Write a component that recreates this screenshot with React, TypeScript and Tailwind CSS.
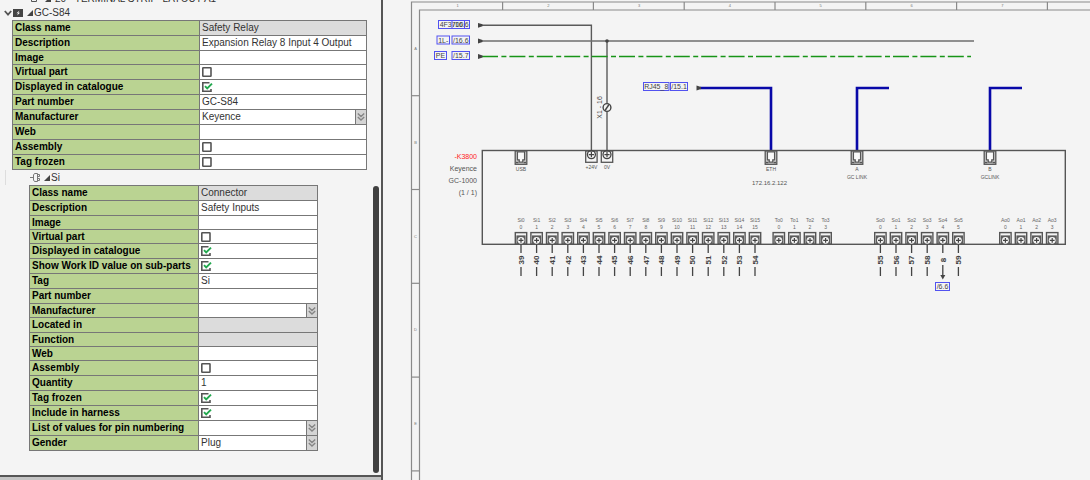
import type { ReactNode } from "react";

type Kind = "readonly" | "text" | "check" | "select";

interface Property {
  label: string;
  kind: Kind;
  value?: string;
  checked?: boolean;
  short?: boolean;
}

const relayProperties: Property[] = [
  { label: "Class name", kind: "readonly", value: "Safety Relay" },
  { label: "Description", kind: "text", value: "Expansion Relay 8 Input 4 Output" },
  { label: "Image", kind: "text", short: true },
  { label: "Virtual part", kind: "check" },
  { label: "Displayed in catalogue", kind: "check", checked: true },
  { label: "Part number", kind: "text", value: "GC-S84" },
  { label: "Manufacturer", kind: "select", value: "Keyence" },
  { label: "Web", kind: "text" },
  { label: "Assembly", kind: "check" },
  { label: "Tag frozen", kind: "check" },
];

const connectorProperties: Property[] = [
  { label: "Class name", kind: "readonly", value: "Connector" },
  { label: "Description", kind: "text", value: "Safety Inputs" },
  { label: "Image", kind: "text", short: true },
  { label: "Virtual part", kind: "check", short: true },
  { label: "Displayed in catalogue", kind: "check", checked: true },
  { label: "Show Work ID value on sub-parts", kind: "check", checked: true },
  { label: "Tag", kind: "text", value: "Si" },
  { label: "Part number", kind: "text" },
  { label: "Manufacturer", kind: "select", short: true },
  { label: "Located in", kind: "readonly" },
  { label: "Function", kind: "readonly", short: true },
  { label: "Web", kind: "text", short: true },
  { label: "Assembly", kind: "check" },
  { label: "Quantity", kind: "text", value: "1" },
  { label: "Tag frozen", kind: "check", checked: true },
  { label: "Include in harness", kind: "check", checked: true },
  { label: "List of values for pin numbering", kind: "select" },
  { label: "Gender", kind: "select", value: "Plug" },
];

const CheckField = ({ id, checked }: { id: string; checked?: boolean }) => (
  <span className="relative ml-px flex size-3 items-center">
    <input id={id} type="checkbox" defaultChecked={checked} className="peer absolute inset-0 appearance-none" />
    <svg viewBox="0 0 12 12" className="pointer-events-none relative size-3 peer-checked:hidden">
      <rect x="1.8" y="1.8" width="8.2" height="8.4" rx="0.5" fill="none" stroke="#555" strokeWidth="1.6" />
    </svg>
    <svg viewBox="0 0 12 12" className="pointer-events-none relative hidden size-3 peer-checked:block">
      <path d="M8.5 1.8H1.8V10.2H10V8" fill="none" stroke="#555" strokeWidth="1.6" />
      <path d="M4 5.2L6.2 7.5L11 2.6" fill="none" stroke="#22a84e" strokeWidth="1.9" />
    </svg>
  </span>
);

const Field = ({ id, property }: { id: string; property: Property }) => {
  const { kind, value = "", checked } = property;
  if (kind === "check") return <CheckField id={id} checked={checked} />;
  if (kind === "select") {
    return (
      <span className="relative flex h-full">
        <select
          id={id}
          defaultValue={value}
          className="h-full w-full appearance-none bg-white pl-0.5 leading-3 outline-none"
        >
          <option value={value}>{value}</option>
        </select>
        <span className="pointer-events-none absolute inset-y-0 right-0 flex w-[11px] items-center justify-center border-l border-[#777] bg-[#d4d4d4]">
          <svg viewBox="0 0 8 8" className="size-2" fill="none" stroke="#858585" strokeWidth="1.4">
            <path d="M0.8 0.5L4 3.6L7.2 0.5M0.8 3.9L4 7L7.2 3.9" />
          </svg>
        </span>
      </span>
    );
  }
  return (
    <input
      id={id}
      type="text"
      defaultValue={value}
      readOnly={kind === "readonly"}
      className="block h-full w-full bg-transparent pb-0.5 pl-0.5 leading-3 outline-none"
    />
  );
};

const PropertyTable = ({ name, rows, className }: { name: string; rows: Property[]; className: string }) => (
  <table className={`table-fixed border-separate border-spacing-0 border-t border-l border-[#777] ${className}`}>
    <tbody>
      {rows.map((row) => {
        const id = `${name}-${row.label.toLowerCase().replaceAll(" ", "-")}`;
        const height = row.short ? "h-3.5" : "h-[15px]";
        const inner = row.short ? "h-[13px]" : "h-3.5";
        return (
          <tr key={row.label} className={height}>
            <th scope="row" className="border-r border-b border-[#777] bg-[#bad392] p-0 text-left font-bold">
              <label htmlFor={id} className={`flex items-center pl-0.5 leading-3 whitespace-nowrap text-black ${inner}`}>
                {row.label}
              </label>
            </th>
            <td className={`border-r border-b border-[#777] p-0 ${row.kind === "readonly" ? "bg-[#dcdcdc]" : "bg-white"}`}>
              <div className={`flex items-center *:shrink-0 ${row.kind === "check" ? "" : "*:w-full"} ${inner}`}>
                <Field id={id} property={row} />
              </div>
            </td>
          </tr>
        );
      })}
    </tbody>
  </table>
);

const Collapse = () => (
  <svg viewBox="0 0 6 6" className="size-1.5 shrink-0">
    <path d="M6 0V6H0Z" fill="#444" />
  </svg>
);

const PropertyPane = () => (
  <aside className="flex w-[383px] shrink-0 flex-col border-r-2 border-[#555] bg-[#f4f4f4] text-[10px] text-[#333]">
    <div className="flex flex-1">
      <div className="min-w-0 flex-1">
        <div className="flex h-[5px] items-end overflow-hidden pl-[31px]">
          <svg viewBox="0 0 6 8" className="mr-2 h-2 w-1.5 shrink-0" fill="none" stroke="#555">
            <path d="M0.5 0V4.5H5.5V0" />
          </svg>
          <span className="flex items-center gap-1">
            <Collapse />
            <span className="leading-3 whitespace-pre">20 - TERMINAL STRIP  LAYOUT A1</span>
          </span>
        </div>
        <div className="flex h-[15px] items-center pl-1">
          <button type="button" aria-label="Toggle GC-S84" className="flex items-center">
            <svg viewBox="0 0 8 6" className="h-1.5 w-2" fill="none" stroke="#555" strokeWidth="1.8">
              <path d="M0.8 1L4 4.6L7.2 1" />
            </svg>
            <svg viewBox="0 0 10 8" className="mr-1 ml-px h-2 w-2.5">
              <rect width="10" height="8" fill="#444" />
              <path d="M6.5 1.5L3.5 4.2H5.2L4 6.6L7 3.8H5.3Z" fill="#fff" />
            </svg>
            <Collapse />
          </button>
          <span className="pl-px leading-3">GC-S84</span>
        </div>
        <PropertyTable name="relay" rows={relayProperties} className="ml-3 w-[355px] [&_th]:w-[187px]" />
        <div className="flex h-[15px] items-center pl-[5px]">
          <span className="h-full border-l border-[#ddd]" />
          <button type="button" aria-label="Toggle Si" className="ml-6 flex items-center gap-[3px]">
            <svg viewBox="0 0 11 9" className="h-[9px] w-[11px]" fill="none" stroke="#777">
              <path d="M0 4.5H4M4.5 0.5H7.5V8.5H4.5L3.5 7V2ZM7.5 1.5H9.5V3.5H7.5M7.5 5.5H9.5V7.5H7.5" />
            </svg>
            <Collapse />
          </button>
          <span className="pl-px leading-3">Si</span>
        </div>
        <PropertyTable name="connector" rows={connectorProperties} className="ml-[29px] w-[289px] [&_th]:w-[169px]" />
      </div>
      <div className="mt-[186px] mr-0.5 mb-0.5 w-1.5 rounded-full bg-[#404040]" />
    </div>
    <div className="h-[5px] border-t-2 border-[#555] bg-[#c4c4c4]" />
  </aside>
);

const PITCH = 15.6;

interface TextProps {
  x: number;
  y: number;
  size?: number;
  anchor?: "start" | "middle" | "end";
  className?: string;
  children: ReactNode;
}

const Txt = ({ x, y, size = 5, anchor = "middle", className = "fill-[#555]", children }: TextProps) => (
  <text x={x} y={y} fontSize={size} textAnchor={anchor} className={className}>
    {children}
  </text>
);

// Cross reference to another sheet
const Reference = ({ x, y, width, label }: { x: number; y: number; width: number; label: string }) => (
  <a href={`#${label}`}>
    <rect x={x} y={y} width={width} height="8" fill="none" stroke="#5252f0" />
    <Txt x={x + width / 2} y={y + 6.6} size={7} className="fill-[#444]">
      {label}
    </Txt>
  </a>
);

const Cross = ({ x, y, r }: { x: number; y: number; r: number }) => (
  <path d={`M${x - r} ${y}h${2 * r}M${x} ${y - r}v${2 * r}`} stroke="#444" strokeWidth="1.2" />
);

const PowerTerminal = ({ x, label }: { x: number; label: string }) => (
  <g>
    <rect x={x - 5.7} y="151" width="11.4" height="11.3" fill="none" stroke="#555" strokeWidth="1.3" />
    <circle cx={x} cy="154.6" r="4" fill="none" stroke="#444" strokeWidth="1.3" />
    <Cross x={x} y={154.6} r={2.6} />
    <Txt x={x} y={169}>
      {label}
    </Txt>
  </g>
);

const Jack = ({ x, label }: { x: number; label: string }) => (
  <g>
    <g fill="none" stroke="#555" strokeWidth="1.3">
      <rect x={x - 5.8} y="151" width="11.6" height="13.3" fill="#d6d6d6" />
      <path d={`M${x - 3.6} 151.8v8h1.8v2.4h3.6v-2.4h1.8v-8z`} fill="#fafafa" />
      <path d={`M${x - 5} 162.5h2.4M${x + 2.6} 162.5h2.4`} />
    </g>
    <Txt x={x} y={171}>
      {label}
    </Txt>
  </g>
);

interface TerminalProps {
  x: number;
  name: string;
  index: number;
  wire?: string;
  arrow?: boolean;
}

const Terminal = ({ x, name, index, wire, arrow }: TerminalProps) => (
  <g>
    <Txt x={x} y={221.8} className="fill-[#666]">
      {name}
    </Txt>
    <Txt x={x} y={229.2} className="fill-[#666]">
      {index}
    </Txt>
    <rect x={x - 5.7} y="232.6" width="11.4" height="11.6" fill="none" stroke="#555" strokeWidth="1.4" />
    <rect x={x - 4.6} y="235.4" width="9.2" height="9" fill="#5c5c5c" />
    <circle cx={x} cy="240.3" r="3.4" fill="#f4f4f4" />
    <Cross x={x} y={240.3} r={2.4} />
    {wire && (
      <>
        <path d={`M${x} 244.5V253M${x} ${arrow ? 265 : 267}V276`} stroke="#444" strokeWidth="1.3" />
        {arrow && <path d={`M${x - 2.5} 275h5l-2.5 4.5z`} fill="#444" />}
        <text
          transform={`translate(${x + 2.8} 260) rotate(-90)`}
          fontSize="8"
          textAnchor="middle"
          className="fill-[#444] font-bold"
        >
          {wire}
        </text>
      </>
    )}
  </g>
);

const safetyOutputs = ["55", "56", "57", "58", "8", "59"];
const columns = ["1", "2", "3", "4", "5", "6", "7"];
const rows = ["A", "B", "C", "D", "E"];

const Schematic = () => (
  <svg role="img" aria-label="Wiring diagram of K3800" className="block h-full w-full">
    {/* Sheet frame with its column and row marks */}
    <g stroke="#8a8a8a" fill="none">
      <path d="M26.5 2000V2H2000M34.5 2000V10H2000" strokeWidth="1.2" />
      {columns.map((column, i) => (
        <path key={column} d={`M${117.6 + i * 90.8} 2V10`} strokeWidth="1.2" />
      ))}
      {rows.map((row, i) => (
        <path key={row} d={`M26.5 ${95.7 + i * 93.8}H34.5`} strokeWidth="1.2" />
      ))}
    </g>
    {columns.map((column, i) => (
      <Txt key={column} x={72.5 + i * 90.8} y={7} size={4} className="fill-[#777]">
        {column}
      </Txt>
    ))}
    {rows.map((row, i) => (
      <Txt key={row} x={30.5} y={50 + i * 93.8} size={4} className="fill-[#777]">
        {row}
      </Txt>
    ))}

    {/* Incoming supplies */}
    <g fill="none" stroke="#5a5a5a" strokeWidth="1.4">
      <path d="M94 25.3H206.4V151" />
      <path d="M94 41H589" stroke="#6e6e6e" strokeWidth="1.7" />
      <path d="M222 41V151" />
    </g>
    <path d="M97 56.5H586" stroke="#179417" strokeWidth="1.5" fill="none" strokeDasharray="16 3.4 5 3" />
    <circle cx="222" cy="41" r="1.8" className="fill-[#444]" />
    {[25.3, 41, 56.5].map((y) => (
      <path key={y} d={`M93 ${y - 2.4}L97.5 ${y - 1}V${y + 1}L93 ${y + 2.4}Z`} className="fill-[#444]" />
    ))}
    <Reference x={53.5} y={20.5} width={26} label="4F3700" />
    <Reference x={67} y={20.5} width={17.5} label="/16.6" />
    <Reference x={52} y={36} width={12.5} label="1L-" />
    <Reference x={67} y={36} width={17.5} label="/16.6" />
    <Reference x={49.5} y={51.5} width={12} label="PE" />
    <Reference x={67} y={51.5} width={17.5} label="/15.7" />

    <circle cx="222" cy="107.5" r="3.9" stroke="#444" strokeWidth="1.4" fill="#f4f4f4" />
    <path d="M220 110.5L224 104.5" stroke="#444" strokeWidth="1.4" />
    <text transform="translate(217 107.5) rotate(-90)" fontSize="7" textAnchor="middle" className="fill-[#444]">
      X1 - 16
    </text>

    {/* Network wiring */}
    <g fill="none" stroke="#0808a8" strokeWidth="2.6">
      <path d="M315 88H386V151" />
      <path d="M504 88H472V151" />
      <path d="M637 88H605V151" />
    </g>
    <path d="M311.5 85.6L316 87V89L311.5 90.4Z" className="fill-[#444]" />
    <Reference x={258.5} y={82.5} width={25.5} label="RJ45_8" />
    <Reference x={285.5} y={82.5} width={17} label="/15.1" />

    {/* Device */}
    <rect x="97.3" y="150.5" width="583" height="93.8" fill="none" stroke="#555" strokeWidth="1.4" />
    <Txt x={92} y={159.4} size={7} anchor="end" className="fill-[#f22]">
      -K3800
    </Txt>
    <Txt x={92} y={171.4} size={7} anchor="end">
      Keyence
    </Txt>
    <Txt x={92} y={183.2} size={7} anchor="end">
      GC-1000
    </Txt>
    <Txt x={92} y={195} size={7} anchor="end">
      (1 / 1)
    </Txt>
    <Jack x={136} label="USB" />
    <PowerTerminal x={206.4} label="+24V" />
    <PowerTerminal x={222} label="0V" />
    <Jack x={386} label="ETH" />
    <Jack x={472} label="A" />
    <Jack x={605} label="B" />
    <Txt x={472} y={179}>GC LINK</Txt>
    <Txt x={605} y={179}>GCLINK</Txt>
    <Txt x={384.5} y={185} size={6}>
      172.16.2.122
    </Txt>

    {Array.from({ length: 16 }, (_, i) => (
      <Terminal key={i} x={136 + i * PITCH} name={`Si${i}`} index={i} wire={String(39 + i)} />
    ))}
    {Array.from({ length: 4 }, (_, i) => (
      <Terminal key={i} x={393.8 + i * PITCH} name={`To${i}`} index={i} />
    ))}
    {safetyOutputs.map((wire, i) => (
      <Terminal key={wire} x={495.4 + i * PITCH} name={`So${i}`} index={i} wire={wire} arrow={wire === "8"} />
    ))}
    {Array.from({ length: 4 }, (_, i) => (
      <Terminal key={i} x={620.4 + i * PITCH} name={`Ao${i}`} index={i} />
    ))}
    <Reference x={550.5} y={282.5} width={14} label="/6.6" />
  </svg>
);

export default function App() {
  return (
    <div className="flex min-h-screen bg-[#f4f4f4] font-['Liberation_Sans',Arial,sans-serif]">
      <PropertyPane />
      <main className="min-w-0 flex-1 self-stretch overflow-hidden pl-0.5">
        <Schematic />
      </main>
    </div>
  );
}
